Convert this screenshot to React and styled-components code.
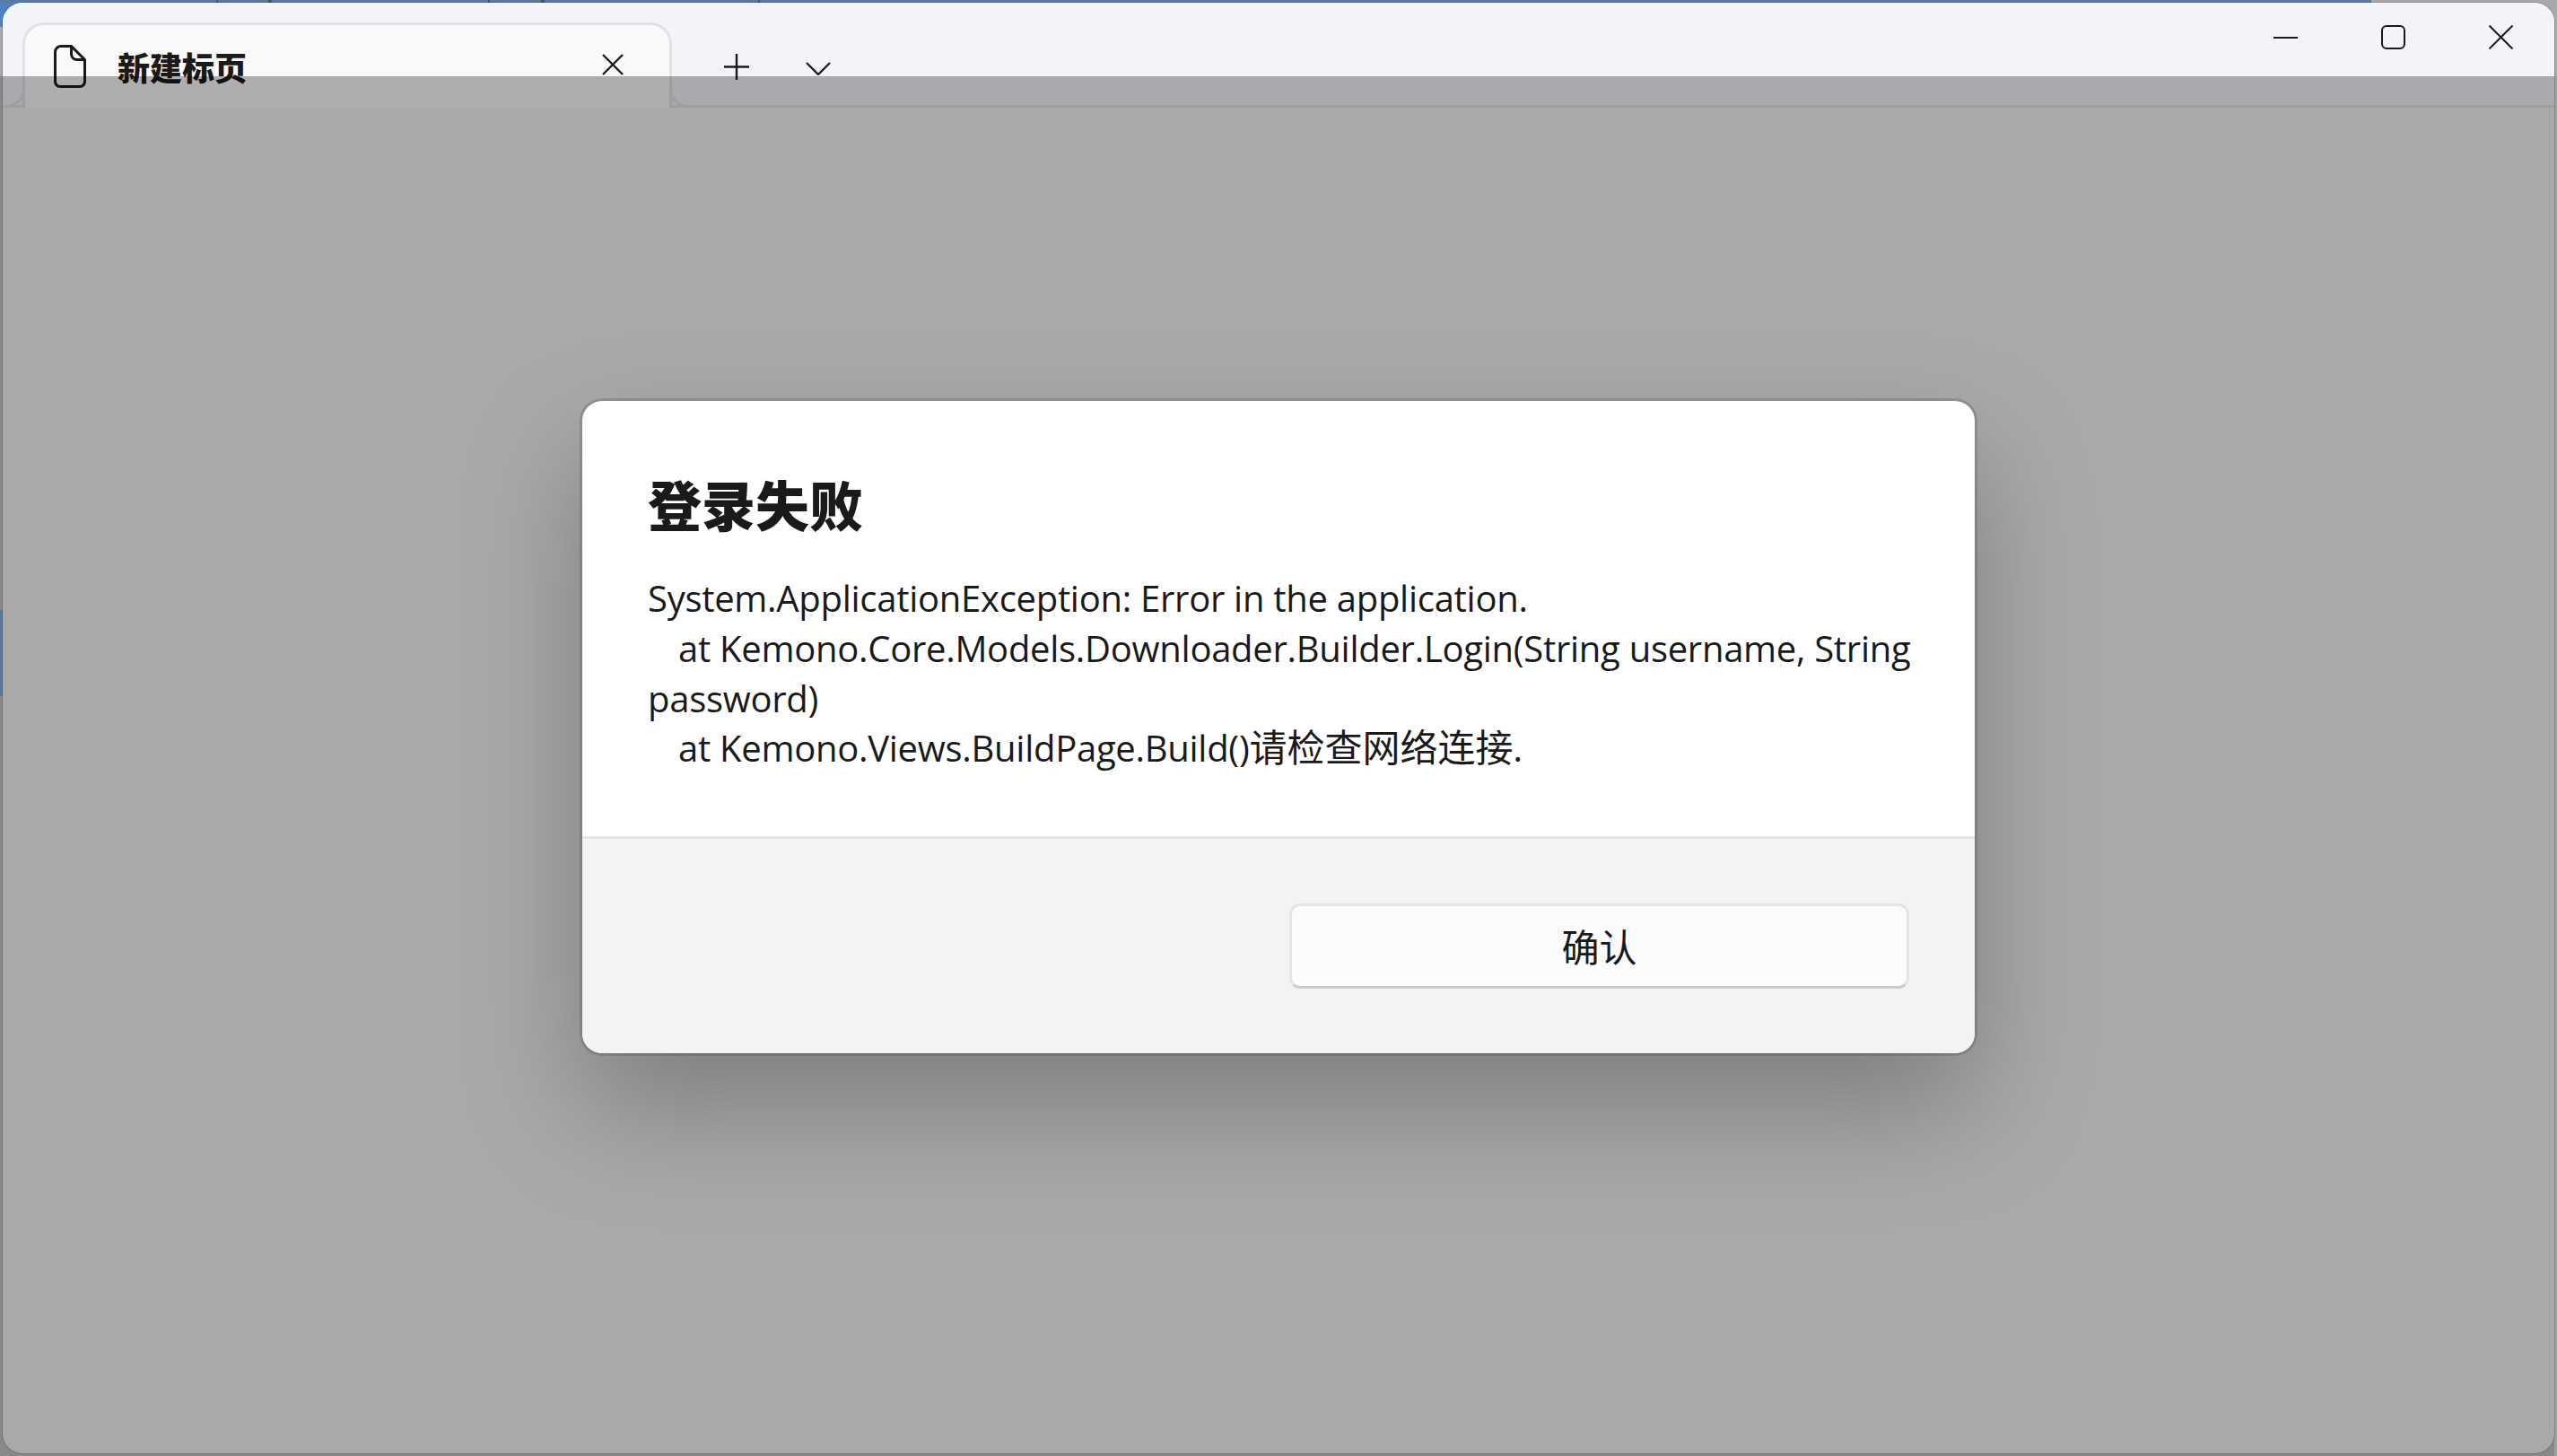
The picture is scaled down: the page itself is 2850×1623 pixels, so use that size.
import React from 'react';
import styled, { createGlobalStyle } from 'styled-components';

const GlobalStyle = createGlobalStyle`
  html, body {
    margin: 0;
    padding: 0;
    background: #c5c5c5;
  }
  * {
    box-sizing: border-box;
  }
`;

const uiFont = `'Open Sans', 'Noto Sans CJK SC', sans-serif`;
const cjkFont = `'Noto Sans CJK SC', 'Open Sans', sans-serif`;

function App() {
  return (
    <Desktop>
      <GlobalStyle />
      <Window>
        <TitleBar>
          <Tab>
            <FileIcon width="36" height="48" viewBox="0 0 36 48">
              <path d="M8 1.5H19.5L34.5 16.5V41A5.5 5.5 0 0 1 29 46.5H7A5.5 5.5 0 0 1 1.5 41V8A6.5 6.5 0 0 1 8 1.5Z" />
              <path d="M19.5 1.5V10.5A6 6 0 0 0 25.5 16.5H34.5" />
            </FileIcon>
            <TabTitle>新建标页</TabTitle>
            <TabClose width="24" height="24" viewBox="0 0 24 24">
              <path d="M1 1L23 23M23 1L1 23" />
            </TabClose>
          </Tab>
          <AddTab width="28" height="29" viewBox="0 0 28 29">
            <path d="M14 0V29M0 14.5H28" />
          </AddTab>
          <TabMenu width="28" height="15" viewBox="0 0 28 15">
            <path d="M1 1L14 14L27 1" />
          </TabMenu>
          <WindowControls>
            <ControlIcon width="27" height="27" viewBox="0 0 27 27">
              <path d="M0 14H27" />
            </ControlIcon>
            <ControlIcon width="27" height="27" viewBox="0 0 27 27">
              <rect x="1" y="1" width="25" height="25" rx="5" />
            </ControlIcon>
            <ControlIcon width="27" height="27" viewBox="0 0 27 27">
              <path d="M0.5 0.5L26.5 26.5M26.5 0.5L0.5 26.5" />
            </ControlIcon>
          </WindowControls>
        </TitleBar>
      </Window>
      <Scrim>
        <Dialog>
          <DialogBody>
            <DialogTitle>登录失败</DialogTitle>
            <DialogMessage>
              <MessageLine>System.ApplicationException: Error in the application.</MessageLine>
              <MessageLine $indent>at Kemono.Core.Models.Downloader.Builder.Login(String username, String password)</MessageLine>
              <MessageLine $indent>
                at Kemono.Views.BuildPage.Build()<MessageCjk>请检查网络连接</MessageCjk>.
              </MessageLine>
            </DialogMessage>
          </DialogBody>
          <DialogFooter>
            <ConfirmButton type="button">确认</ConfirmButton>
          </DialogFooter>
        </Dialog>
      </Scrim>
    </Desktop>
  );
}

const Desktop = styled.div`
  position: relative;
  width: 2850px;
  height: 1623px;
  padding: 3px;
  overflow: hidden;
  background-color: #c5c5c5;
  background-repeat: no-repeat;
  background-image:
    linear-gradient(#3f5468, #3f5468),
    linear-gradient(#3f5468, #3f5468),
    linear-gradient(#3f5468, #3f5468),
    linear-gradient(#3f5468, #3f5468),
    linear-gradient(#3f5468, #3f5468),
    linear-gradient(#5a7a9f, #5a7a9f),
    linear-gradient(#4a82c4, #4a82c4),
    linear-gradient(#83aedd, #83aedd),
    linear-gradient(#a9a9ab, #a9a9ab),
    linear-gradient(#e6e6e6, #e6e6e6);
  background-size:
    2px 3px, 4px 3px, 2px 3px, 4px 3px, 2px 3px,
    2643px 3px,
    22px 30px,
    3px 96px,
    100% 85px,
    3px 100%;
  background-position:
    241px 0, 299px 0, 544px 0, 603px 0, 845px 0,
    0 0,
    0 0,
    0 680px,
    0 0,
    100% 0;
`;

const Window = styled.div`
  display: flex;
  flex-direction: column;
  width: 2844px;
  height: 1617px;
  border-radius: 22px;
  background: #f3f3f3;
  box-shadow: 0 0 0 1px rgba(0, 0, 0, 0.16);
  overflow: hidden;
`;

const TitleBar = styled.div`
  display: flex;
  align-items: flex-start;
  height: 117px;
  padding: 22px 46px 0 22px;
  background: #f3f4f9;
  border-bottom: 3px solid #e2e2e6;
`;

const Tab = styled.div`
  position: relative;
  display: flex;
  align-items: center;
  flex-shrink: 0;
  width: 724px;
  height: 95px;
  padding: 0 51px 0 32px;
  background: #f9f9f9;
  border: 3px solid #e2e2e6;
  border-bottom: none;
  border-radius: 24px 24px 0 0;

  &::before,
  &::after {
    content: '';
    position: absolute;
    bottom: 0;
    width: 21px;
    height: 21px;
    border-bottom: 3px solid #e2e2e6;
    background: #f3f4f9;
  }

  &::before {
    left: -24px;
    border-right: 3px solid #e2e2e6;
    border-bottom-right-radius: 21px;
  }

  &::after {
    right: -24px;
    border-left: 3px solid #e2e2e6;
    border-bottom-left-radius: 21px;
  }
`;

const FileIcon = styled.svg`
  flex-shrink: 0;
  fill: none;
  stroke: #1a1a1a;
  stroke-width: 3;
`;

const TabTitle = styled.span`
  flex: 1;
  margin-left: 35px;
  font-family: ${cjkFont};
  font-size: 36px;
  font-weight: 900;
  line-height: 48px;
  color: #1a1a1a;
`;

const TabClose = styled.svg`
  flex-shrink: 0;
  margin-bottom: 4px;
  fill: none;
  stroke: #1a1a1a;
  stroke-width: 2.4;
`;

const AddTab = styled.svg`
  flex-shrink: 0;
  margin: 35px 0 0 58px;
  fill: none;
  stroke: #1a1a1a;
  stroke-width: 2.4;
`;

const TabMenu = styled.svg`
  flex-shrink: 0;
  margin: 44px 0 0 63px;
  fill: none;
  stroke: #1a1a1a;
  stroke-width: 2.4;
`;

const WindowControls = styled.div`
  display: flex;
  gap: 93px;
  margin: 3px 0 0 auto;
`;

const ControlIcon = styled.svg`
  display: block;
  fill: none;
  stroke: #1a1a1a;
  stroke-width: 2;
`;

const Scrim = styled.div`
  position: absolute;
  top: 85px;
  left: 0;
  right: 0;
  bottom: 0;
  display: flex;
  align-items: center;
  justify-content: center;
  padding-bottom: 87px;
  background: rgba(0, 0, 0, 0.3);
`;

const Dialog = styled.div`
  display: flex;
  flex-direction: column;
  width: 1552px;
  height: 727px;
  border-radius: 22px;
  background: #ffffff;
  overflow: hidden;
  box-shadow: 0 0 0 3px rgba(0, 0, 0, 0.13), 0 60px 130px rgba(0, 0, 0, 0.25);
`;

const DialogBody = styled.div`
  display: flex;
  flex-direction: column;
  height: 485px;
  padding: 74px 63px 0 73px;
`;

const DialogTitle = styled.h2`
  margin: 0 0 38px;
  font-family: ${cjkFont};
  font-size: 60px;
  font-weight: 900;
  line-height: 80px;
  color: #1a1a1a;
`;

const DialogMessage = styled.div`
  font-family: ${uiFont};
  font-size: 40px;
  letter-spacing: -0.28px;
  line-height: 55.8px;
  color: #1a1a1a;
`;

const MessageLine = styled.div`
  text-indent: ${(props) => (props.$indent ? '34px' : '0')};
`;

const MessageCjk = styled.span`
  font-family: ${cjkFont};
  font-size: 42px;
  line-height: 1;
  letter-spacing: 0;
`;

const DialogFooter = styled.div`
  display: grid;
  grid-template-columns: 1fr 1fr;
  gap: 24px;
  flex: 1;
  padding: 72px 73px 0;
  background: #f3f3f3;
  border-top: 3px solid #e5e5e5;
`;

const ConfirmButton = styled.button`
  grid-column: 2;
  height: 95px;
  padding-bottom: 4px;
  border: 3px solid #e5e5e5;
  border-bottom-color: #cccccc;
  border-radius: 12px;
  background: #fbfbfb;
  font-family: ${cjkFont};
  font-size: 42px;
  color: #1a1a1a;
`;

export default App;
